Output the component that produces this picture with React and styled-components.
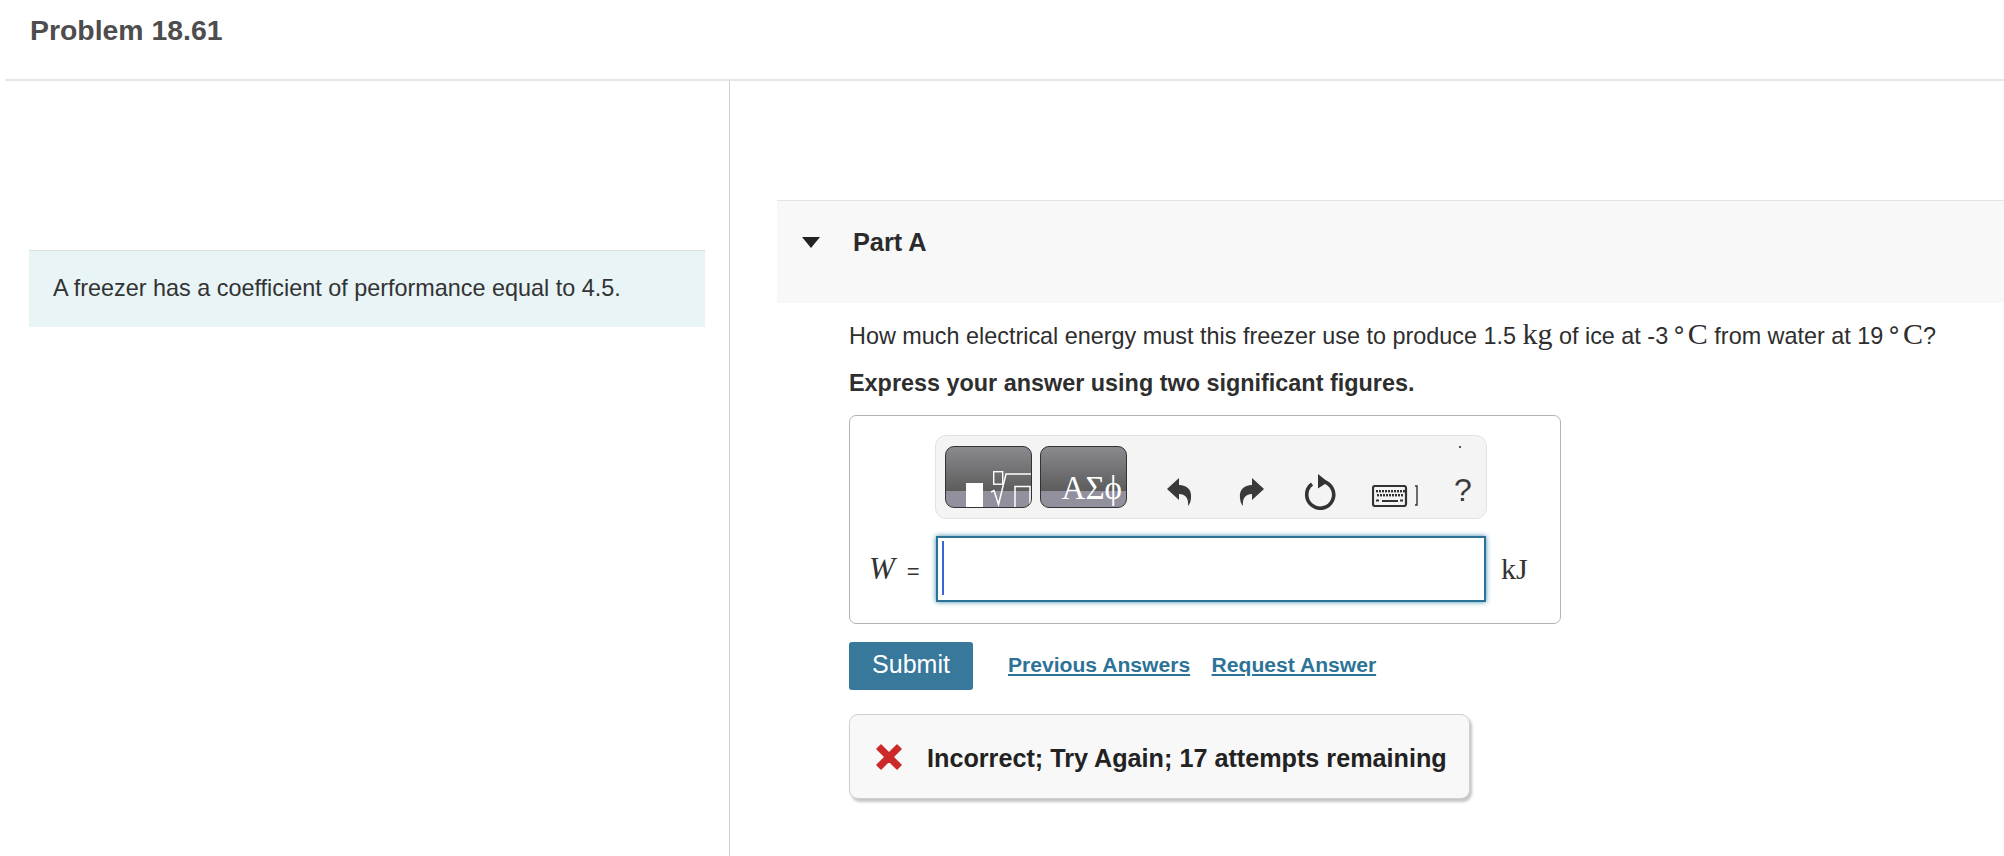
import React from "react";
import styled, { createGlobalStyle } from "styled-components";

const Global = createGlobalStyle`
  html, body { margin: 0; padding: 0; background: #fff; }
  body { font-family: "Liberation Sans", Arial, sans-serif; color: #2b2b2b; overflow: hidden; }
`;

const Page = styled.div`
  width: 2004px;
  height: 856px;
  padding-left: 5px;
  box-sizing: border-box;
  display: flex;
  flex-direction: column;
  overflow: hidden;
`;
const Header = styled.header`
  height: 81px;
  box-sizing: border-box;
  border-bottom: 2px solid #e6e6e6;
  padding: 14px 0 0 25px;
`;
const Title = styled.h1`
  margin: 0;
  font-size: 28.4px;
  line-height: 32px;
  font-weight: 700;
  color: #4d4d4d;
`;
const Body = styled.div`
  flex: 1;
  display: flex;
  min-height: 0;
`;
const Aside = styled.aside`
  width: 725px;
  box-sizing: border-box;
  border-right: 1px solid #c8d3e2;
  padding: 169px 24px 0 24px;
`;
const Intro = styled.div`
  height: 77px;
  box-sizing: border-box;
  background: #e8f4f6;
  border-top: 1px solid #dedede;
  padding: 23px 0 0 24px;
  font-size: 23.4px;
  line-height: 29px;
  color: #333;
`;
const Main = styled.main`
  flex: 1;
  padding: 119px 0 0 47px;
  min-width: 0;
`;
const PartHeader = styled.div`
  height: 103px;
  box-sizing: border-box;
  background: #f8f8f8;
  border-top: 1px solid #e4e4e4;
  display: flex;
  align-items: flex-start;
  padding: 26px 0 0 25px;
  gap: 33px;
`;
const Caret = styled.span`
  width: 0;
  height: 0;
  margin-top: 10px;
  border-left: 9.5px solid transparent;
  border-right: 9.5px solid transparent;
  border-top: 11px solid #222;
`;
const PartTitle = styled.h2`
  margin: 0;
  font-size: 25.3px;
  line-height: 30px;
  font-weight: 700;
  color: #2b2b2b;
`;
const Content = styled.div`
  padding: 18px 0 0 72px;
`;
const Question = styled.p`
  margin: 0;
  font-size: 23.4px;
  line-height: 30px;
  color: #2e2e2e;
  white-space: nowrap;
`;
const MathText = styled.span`
  font-family: "Liberation Serif", "DejaVu Serif", serif;
  font-size: 30px;
  line-height: 0;
`;
const Degree = styled.sup`
  font-family: "DejaVu Sans", serif;
  font-size: 25px;
  line-height: 0;
  vertical-align: 6px;
  margin: 0 1px 0 3px;
`;
const Instruction = styled.p`
  margin: 17px 0 0;
  font-size: 23.4px;
  line-height: 30px;
  font-weight: 700;
  color: #2e2e2e;
`;
const AnswerBox = styled.div`
  margin-top: 17px;
  width: 712px;
  height: 209px;
  box-sizing: border-box;
  border: 1px solid #b4b4b4;
  border-radius: 7px;
  display: grid;
  grid-template-columns: 85px 552px 1fr;
  grid-template-rows: 84px 66px;
  row-gap: 17px;
  padding-top: 19px;
`;
const Toolbar = styled.div`
  grid-column: 2;
  grid-row: 1;
  position: relative;
  box-sizing: border-box;
  background: #f4f4f4;
  border: 1px solid #e2e2e2;
  border-radius: 11px;
  display: flex;
  padding: 10px 0 0 9px;
`;
const MathButton = styled.div`
  position: relative;
  width: 87px;
  height: 62px;
  box-sizing: border-box;
  margin-right: 8px;
  border: 1px solid #333;
  border-radius: 9px;
  overflow: hidden;
  background: linear-gradient(#8a8a8f 0%, #5c5c5c 74%, #92909c 74%, #92909c 100%);
  flex: none;
`;
const Glyphs = styled.span`
  position: absolute;
  right: 4px;
  bottom: 1px;
  font-family: "Liberation Serif", "DejaVu Serif", serif;
  font-size: 33px;
  line-height: 36px;
  color: #fff;
  white-space: nowrap;
`;
const Tools = styled.div`
  position: absolute;
  left: 230px;
  top: 38px;
  display: flex;
  align-items: flex-start;
`;
const Help = styled.span`
  position: absolute;
  left: 518px;
  top: 36px;
  font-size: 32px;
  line-height: 36px;
  color: #3a3a3a;
`;
const Speck = styled.i`
  position: absolute;
  left: 523px;
  top: 10px;
  width: 1.5px;
  height: 2px;
  background: #555;
`;
const Icon = styled.svg`
  display: block;
  flex: none;
`;
const Variable = styled.div`
  grid-column: 1;
  grid-row: 2;
  align-self: center;
  padding-left: 19px;
  font-family: "Liberation Serif", serif;
  font-size: 31px;
  color: #333;
  white-space: nowrap;
`;
const VarName = styled.i`
  margin-right: 12px;
`;
const Equals = styled.span`
  font-family: "Liberation Sans", sans-serif;
  font-size: 22px;
`;
const InputField = styled.div`
  grid-column: 2;
  grid-row: 2;
  box-sizing: border-box;
  margin-left: 1px;
  width: 550px;
  border: 2px solid #2c7296;
  box-shadow: 0 0 5px #3f87ab;
  padding: 3px 0 0 4px;
  background: #fff;
`;
const TextCaret = styled.span`
  display: block;
  width: 1.5px;
  height: 54px;
  background: #3b66d8;
`;
const Unit = styled.div`
  grid-column: 3;
  grid-row: 2;
  align-self: center;
  padding-left: 14px;
  font-family: "Liberation Serif", "DejaVu Serif", serif;
  font-size: 30px;
  color: #333;
`;
const Actions = styled.div`
  margin-top: 18px;
  display: flex;
  align-items: center;
`;
const Submit = styled.button`
  width: 124px;
  height: 48px;
  border: 0;
  border-radius: 3px;
  background: #37789b;
  color: #fff;
  font-family: "Liberation Sans", sans-serif;
  font-size: 25px;
  margin-right: 35px;
  padding: 0 0 4px;
`;
const ActionLink = styled.a`
  color: #2d7398;
  font-size: 21.1px;
  font-weight: 700;
  text-decoration: underline;
  margin: -2px 21.5px 0 0;
`;
const Feedback = styled.div`
  margin-top: 24px;
  width: 621px;
  height: 85px;
  box-sizing: border-box;
  background: #f8f8f8;
  border: 1px solid #cfcfcf;
  border-radius: 9px;
  box-shadow: 2px 3px 3px #c4c4c4;
  display: flex;
  align-items: center;
  padding-left: 26px;
  gap: 25px;
`;
const FeedbackText = styled.span`
  font-size: 25.2px;
  font-weight: 700;
  color: #222;
  white-space: nowrap;
  padding-top: 3px;
`;

const keyRows = [
  [4, 7, 10, 13, 16, 19, 22, 25, 28, 31],
  [5, 8, 11, 14, 17, 20, 23, 26, 29],
];

const Templates = () => (
  <MathButton>
    <Icon width="85" height="60" viewBox="1 1 85 60" fill="none">
      <rect x="21" y="37" width="17" height="25" fill="#fff" />
      <rect x="48.7" y="25.700" width="9" height="12.500" stroke="#fff" strokeWidth="1.400" />
      <path d="M46 46l3-1.500 4.500 14 7.500-30.500h26" stroke="#fff" strokeWidth="1.500" />
      <path d="M70 62V40.500h15v21.500" stroke="#fff" strokeWidth="1.500" />
    </Icon>
  </MathButton>
);

const Undo = () => (
  <Icon width="26" height="30" viewBox="0 0 26 30">
    <path d="M1 12 13 1v7c8 0 13 5 12 13-.2 3-1 6-3 8 1-8-3-12-9-12v6z" fill="#3a3a3a" />
  </Icon>
);
const Redo = () => (
  <Icon width="26" height="30" viewBox="0 0 26 30">
    <path d="M25 12 13 1v7C5 8 0 13 1 21c.2 3 1 6 3 8-1-8 3-12 9-12v6z" fill="#3a3a3a" />
  </Icon>
);
const Reset = () => (
  <Icon width="32" height="36" viewBox="0 0 32 36" fill="none">
    <path d="M19 7.500A13.500 13.500 0 1 1 8 10" stroke="#333" strokeWidth="3.600" />
    <path d="M14 0l10 8-10 6.500z" fill="#333" />
  </Icon>
);
const Keyboard = () => (
  <Icon width="48" height="22" viewBox="0 0 48 22" fill="none">
    <rect x="1" y="1" width="33" height="20" rx="2" stroke="#333" strokeWidth="2.200" />
    {keyRows.map((row, r) =>
      row.map((x) => <rect key={r + "-" + x} x={x} y={5 + r * 4} width="2" height="2.400" fill="#333" />)
    )}
    <rect x="4" y="14.500" width="3" height="2" fill="#333" />
    <rect x="10" y="15" width="16" height="2" fill="#333" />
    <rect x="28" y="14.500" width="3" height="2" fill="#333" />
    <path d="M43 1h2v19h-2" stroke="#333" strokeWidth="1.400" />
  </Icon>
);

const ToolSlot = styled.div`
  width: ${(p) => p.$w}px;
  margin-top: ${(p) => p.$top || 0}px;
  flex: none;
`;

const Cross = () => (
  <Icon width="26" height="26" viewBox="0 0 26 26">
    <path d="M5 1 13 9 21 1 25 5 17 13 25 21 21 25 13 17 5 25 1 21 9 13 1 5z" fill="#cc2a2a" stroke="#cc2a2a" strokeLinejoin="round" strokeWidth="1.500" />
  </Icon>
);

export default function App() {
  return (
    <>
      <Global />
      <Page>
        <Header>
          <Title>Problem 18.61</Title>
        </Header>
        <Body>
          <Aside>
            <Intro>A freezer has a coefficient of performance equal to 4.5.</Intro>
          </Aside>
          <Main>
            <PartHeader>
              <Caret />
              <PartTitle>Part A</PartTitle>
            </PartHeader>
            <Content>
              <Question>
                How much electrical energy must this freezer use to produce 1.5 <MathText>kg</MathText> of ice at -3
                <Degree>∘</Degree>
                <MathText>C</MathText> from water at 19<Degree>∘</Degree>
                <MathText>C</MathText>?
              </Question>
              <Instruction>Express your answer using two significant figures.</Instruction>
              <AnswerBox>
                <Toolbar>
                  <Templates />
                  <MathButton>
                    <Glyphs>ΑΣϕ</Glyphs>
                  </MathButton>
                  <Tools>
                    <ToolSlot $w={73} $top={3}><Undo /></ToolSlot>
                    <ToolSlot $w={65} $top={3}><Redo /></ToolSlot>
                    <ToolSlot $w={68}><Reset /></ToolSlot>
                    <ToolSlot $w={48} $top={11}><Keyboard /></ToolSlot>
                  </Tools>
                  <Speck />
                  <Help>?</Help>
                </Toolbar>
                <Variable>
                  <VarName>W</VarName>
                  <Equals>=</Equals>
                </Variable>
                <InputField>
                  <TextCaret />
                </InputField>
                <Unit>kJ</Unit>
              </AnswerBox>
              <Actions>
                <Submit>Submit</Submit>
                <ActionLink>Previous Answers</ActionLink>
                <ActionLink>Request Answer</ActionLink>
              </Actions>
              <Feedback>
                <Cross />
                <FeedbackText>Incorrect; Try Again; 17 attempts remaining</FeedbackText>
              </Feedback>
            </Content>
          </Main>
        </Body>
      </Page>
    </>
  );
}
